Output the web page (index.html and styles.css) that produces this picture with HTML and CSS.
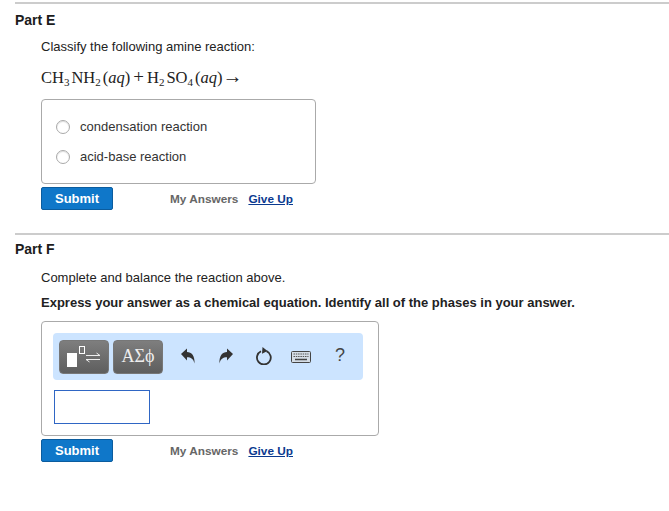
FILE: index.html
```html
<!DOCTYPE html>
<html lang="en">
<head>
<meta charset="utf-8">
<title>Part E and F</title>
<link rel="stylesheet" href="styles.css">
</head>
<body>
<section class="part part-e">
  <h2 class="part-title">Part E</h2>
  <div class="part-body">
    <p class="prompt">Classify the following amine reaction:</p>
    <p class="math">CH<sub>3</sub><span class="gap"></span>NH<sub>2</sub><span class="gap"></span>(<i>aq</i>)<span class="op">+</span>H<sub>2</sub><span class="gap"></span>SO<sub>4</sub><span class="gap"></span>(<i>aq</i>)<span class="arrow">→</span></p>
    <div class="box choices">
      <label class="choice"><span class="radio"></span>condensation reaction</label>
      <label class="choice"><span class="radio"></span>acid-base reaction</label>
    </div>
    <div class="actions">
      <button class="submit" type="button">Submit</button>
      <span class="my-answers">My Answers</span>
      <a class="give-up" href="#">Give Up</a>
    </div>
  </div>
</section>
<section class="part part-f">
  <h2 class="part-title">Part F</h2>
  <div class="part-body">
    <p class="prompt">Complete and balance the reaction above.</p>
    <p class="instruction">Express your answer as a chemical equation. Identify all of the phases in your answer.</p>
    <div class="box editor">
      <div class="toolbar">
        <button class="tool template" type="button" aria-label="Templates">
          <svg width="48" height="32" viewBox="0 0 48 32"><rect x="7" y="12" width="10" height="14" fill="#fff"/><rect x="19.500" y="5.500" width="5" height="7" fill="none" stroke="#fff"/><path d="M26 14.500h14l-3.500-2.500M40 18.500h-14l3.500 2.500" fill="none" stroke="#eee"/></svg>
        </button>
        <button class="tool greek" type="button">ΑΣϕ</button>
        <span class="icons">
          <svg class="icon" width="14" height="16" viewBox="0 0 14 16"><path d="M0 6 6 .5v3.400c4.500.2 8 3.500 7.500 11.600-1-4.700-3.500-6.300-7.500-6.300v3.300z" fill="#333"/></svg>
          <svg class="icon redo" width="14" height="16" viewBox="0 0 14 16"><path d="M14 6 8 .5v3.400c-4.500.2-8 3.500-7.500 11.600 1-4.700 3.500-6.300 7.500-6.300v3.300z" fill="#333"/></svg>
          <svg class="icon refresh" width="18" height="18" viewBox="0 0 18 18"><path d="M11.500 4.200a6.900 6.900 0 1 1-5.500.1" fill="none" stroke="#333" stroke-width="1.800"/><path d="M7.500 0 12.500 4 7 6.800z" fill="#333"/></svg>
          <svg class="icon keyboard" width="20" height="12" viewBox="0 0 20 12"><rect x=".5" y=".5" width="19" height="11" rx="1" fill="#d5dde6" stroke="#444"/><path d="M2.500 3h15M2.500 5.500h15" stroke="#555" stroke-dasharray="1.500 .8"/><path d="M4 8.500h12" stroke="#444" stroke-width="1.500"/></svg>
          <span class="help">?</span>
        </span>
      </div>
      <div class="answer"></div>
    </div>
    <div class="actions">
      <button class="submit" type="button">Submit</button>
      <span class="my-answers">My Answers</span>
      <a class="give-up" href="#">Give Up</a>
    </div>
  </div>
</section>
</body>
</html>
```
FILE: styles.css
```css
* { box-sizing: border-box; }
html, body { margin: 0; padding: 0; }
body {
  width: 669px;
  height: 511px;
  overflow: hidden;
  background: #fff;
  color: #222;
  font: 13px/16px "Liberation Sans", Arial, sans-serif;
}
.part { margin-left: 15px; }
.part-e { border-top: 2px solid #ccc; margin-top: 2px; padding-top: 8px; }
.part-f { border-top: 2px solid #ccc; margin-top: 23px; padding-top: 6px; }
.part-title { margin: 0; font-size: 14px; line-height: 16px; font-weight: bold; color: #1c1c1c; }
.part-body { margin-left: 26px; }
.part-e .prompt { margin: 11px 0 0; }
.part-f .prompt { margin: 13px 0 0; }
.instruction { margin: 9px 0 0; font-weight: bold; }
.math {
  margin: 13px 0 0;
  height: 20px;
  font: 16.500px/20px "Liberation Serif", "Times New Roman", serif;
  white-space: nowrap;
  color: #222;
}
.math sub { font-size: 11px; line-height: 0; vertical-align: -3px; }
.gap { display: inline-block; width: 2px; }
.op { margin: 0 3px; font-size: 19px; line-height: 0; }
.arrow { font-size: 20px; line-height: 0; }
.box { border: 1px solid #aaa; border-radius: 4px; background: #fff; }
.choices {
  width: 275px;
  height: 85px;
  margin-top: 11px;
  padding: 19px 14px 0;
  display: flex;
  flex-direction: column;
  gap: 14px;
}
.choice { display: flex; align-items: center; gap: 10px; height: 16px; color: #333; }
.radio {
  width: 14px;
  height: 14px;
  border: 1px solid #aaa;
  border-radius: 50%;
  background: #fff;
  box-shadow: inset 0 1px 1px #ddd;
}
.actions { display: flex; align-items: center; height: 23px; margin-top: 3px; }
.submit {
  width: 72px;
  height: 23px;
  padding: 0;
  border: 1px solid #0b5c9e;
  border-radius: 2px;
  background: #0f77c9;
  color: #fff;
  font: bold 13px "Liberation Sans", Arial, sans-serif;
}
.my-answers { margin-left: 57px; font-size: 11.800px; font-weight: bold; color: #666; }
.give-up { margin-left: 10px; font-size: 11.800px; font-weight: bold; color: #0b3a8f; }
.editor { width: 338px; height: 115px; margin-top: 10px; padding: 11px; }
.toolbar {
  display: flex;
  align-items: center;
  width: 310px;
  height: 47px;
  padding-left: 6px;
  background: #cce4ff;
  border-radius: 4px;
  gap: 4px;
}
.tool {
  width: 50px;
  height: 34px;
  padding: 0;
  border: 1px solid #777;
  border-radius: 4px;
  background: linear-gradient(#7e7e7e, #5e5e5e);
  color: #eee;
  display: flex;
  align-items: center;
  justify-content: center;
}
.greek { font: 18px "Liberation Serif", serif; }
.icons { display: flex; align-items: center; margin: -2px 0 0 14px; color: #333; }
.icon { display: block; flex: none; }
.redo { margin-left: 24px; }
.refresh { margin-left: 22px; }
.keyboard { margin-left: 18px; margin-top: 3px; }
.help { font: 18px "Liberation Sans", sans-serif; color: #444; margin-left: 24px; }
.answer { width: 96px; height: 34px; margin: 10px 0 0 1px; border: 1px solid #2f66c4; }
```
